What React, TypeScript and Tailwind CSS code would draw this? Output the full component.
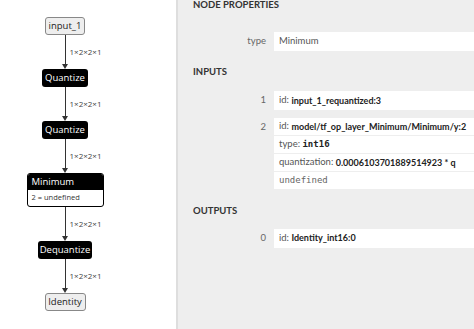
import React from 'react';

const font = { fontFamily: '"Open Sans", "Noto Sans", sans-serif' };
const panelFont = { fontFamily: 'Lato, "Open Sans", sans-serif' };

const Edge: React.FC<{ label: string }> = ({ label }) => (
  <div className="relative flex h-[34px] w-px flex-col items-center">
    <div className="w-px flex-1 bg-[#333]" />
    <svg width="6" height="5" viewBox="0 0 6 5" className="shrink-0">
      <path d="M0 0 L6 0 L3 5 Z" fill="#333" />
    </svg>
    <span className="absolute left-[5px] top-[12px] whitespace-nowrap text-[8px] leading-[10px] text-[#444]">
      {label}
    </span>
  </div>
);

const OpNode: React.FC<{ name: string; w: string }> = ({ name, w }) => (
  <div className={`flex h-[18px] ${w} items-center justify-center rounded-[3px] bg-black text-[9.5px] text-white`}>
    {name}
  </div>
);

const IoNode: React.FC<{ name: string; w: string }> = ({ name, w }) => (
  <div className={`flex h-[18px] ${w} items-center justify-center rounded-[3px] border border-[#888] bg-[#eee] text-[9.5px] text-[#222]`}>
    {name}
  </div>
);

const Graph: React.FC = () => (
  <div className="flex w-[130px] flex-col items-center pt-[17px]">
    <IoNode name="input_1" w="w-[40px]" />
    <Edge label="1×2×2×1" />
    <OpNode name="Quantize" w="w-[46px]" />
    <Edge label="1×2×2×1" />
    <OpNode name="Quantize" w="w-[46px]" />
    <Edge label="1×2×2×1" />
    <div className="w-[77px] overflow-hidden rounded-[3px] border border-black bg-white">
      <div className="flex h-[16px] items-center bg-black px-[4px] text-[9.5px] text-white">Minimum</div>
      <div className="flex h-[16px] items-center px-[4px] text-[7.5px] text-[#333]">2 = undefined</div>
    </div>
    <Edge label="1×2×2×1" />
    <OpNode name="Dequantize" w="w-[54px]" />
    <Edge label="1×2×2×1" />
    <IoNode name="Identity" w="w-[41px]" />
  </div>
);

const Label: React.FC<{ children: React.ReactNode }> = ({ children }) => (
  <div className="flex h-[19px] w-[73px] shrink-0 items-center justify-end text-[9.5px] text-[#666]">{children}</div>
);

const Mono: React.FC<{ children: React.ReactNode; bold?: boolean }> = ({ children, bold }) => (
  <span
    className={`text-[9px] ${bold ? 'font-bold text-[#222]' : 'text-[#666]'}`}
    style={{ fontFamily: '"DejaVu Sans Mono", monospace' }}
  >
    {children}
  </span>
);

const B: React.FC<{ children: React.ReactNode }> = ({ children }) => (
  <b className="text-[9px] text-[#222]">{children}</b>
);

const Section: React.FC<{ title: string; className: string }> = ({ title, className }) => (
  <div className={`text-[9.5px] font-bold leading-none text-[#333] ${className}`}>{title}</div>
);

export default function App() {
  return (
    <div className="flex h-[329px] w-[474px] overflow-hidden bg-white" style={font}>
      <div className="w-[176px] shrink-0">
        <Graph />
      </div>
      <div className="flex flex-1 flex-col border-l-2 border-[#dedede] bg-[#eeeeee] pl-[15px]" style={panelFont}>
        <Section title="NODE PROPERTIES" className="mt-0" />
        <div className="mt-[22px] flex gap-[8px]">
          <Label>type</Label>
          <div className="flex h-[19px] flex-1 items-center bg-white px-[5px] text-[9.5px] text-[#555]">Minimum</div>
        </div>
        <Section title="INPUTS" className="mt-[16px]" />
        <div className="mt-[15px] flex gap-[8px]">
          <Label>1</Label>
          <div className="flex h-[19px] flex-1 items-center bg-white px-[5px] text-[9.5px] text-[#555]">
            id:&nbsp;<B>input_1_requantized:3</B>
          </div>
        </div>
        <div className="mt-[8px] flex gap-[8px]">
          <Label>2</Label>
          <div className="flex flex-1 flex-col bg-white text-[9.5px] text-[#555]">
            <div className="flex h-[18px] items-center whitespace-nowrap border-b border-[#eee] px-[5px]">
              id:&nbsp;<B>model/tf_op_layer_Minimum/Minimum/y:2</B>
            </div>
            <div className="flex h-[18px] items-center border-b border-[#eee] px-[5px]">
              type:&nbsp;<Mono bold>int16</Mono>
            </div>
            <div className="flex h-[18px] items-center whitespace-nowrap border-b border-[#eee] px-[5px]">
              quantization:&nbsp;<B>0.0006103701889514923 * q</B>
            </div>
            <div className="flex h-[17px] items-center px-[5px]">
              <Mono>undefined</Mono>
            </div>
          </div>
        </div>
        <Section title="OUTPUTS" className="mt-[17px]" />
        <div className="mt-[13px] flex gap-[8px]">
          <Label>0</Label>
          <div className="flex h-[19px] flex-1 items-center bg-white px-[5px] text-[9.5px] text-[#555]">
            id:&nbsp;<B>Identity_int16:0</B>
          </div>
        </div>
      </div>
    </div>
  );
}
